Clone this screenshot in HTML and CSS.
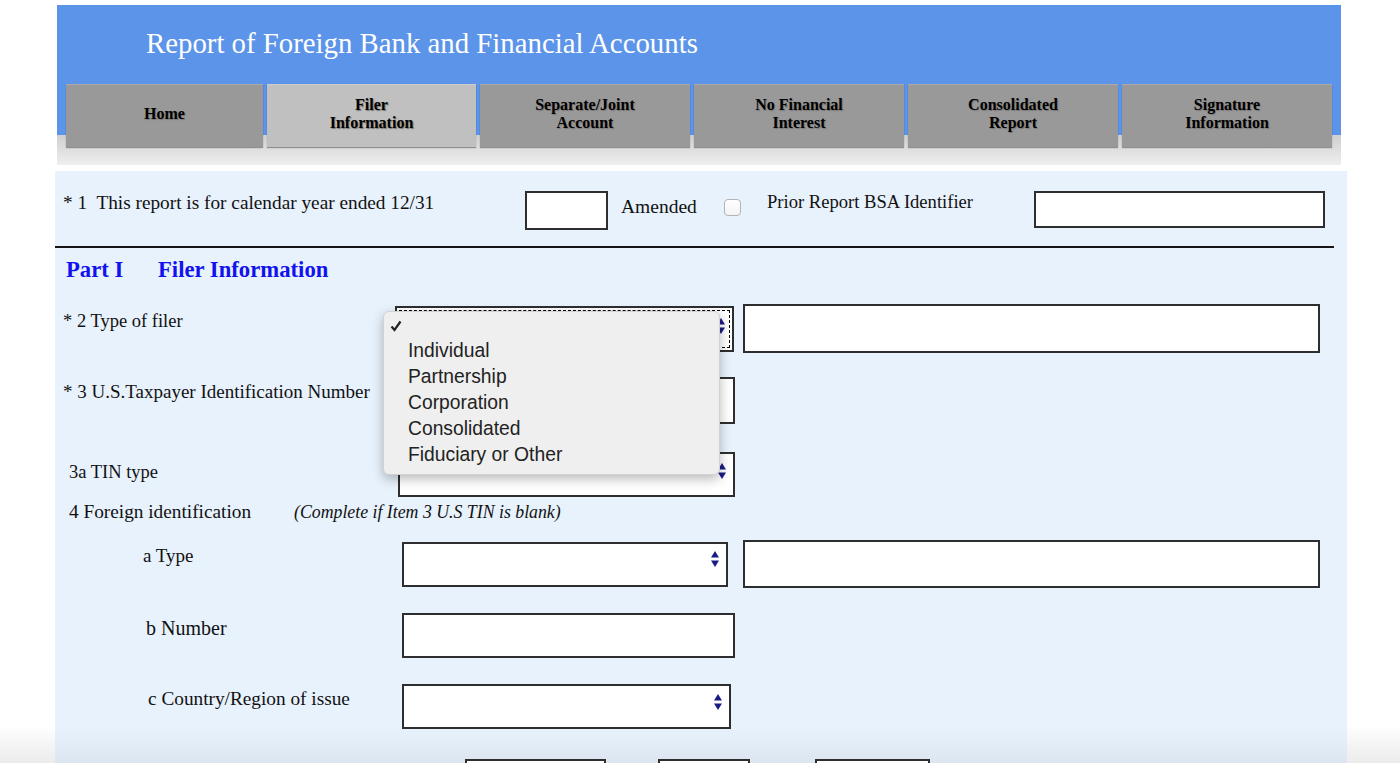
FILE: index.html
```html
<!DOCTYPE html>
<html lang="en">
<head>
  <meta charset="UTF-8" />
  <meta name="viewport" content="width=device-width, initial-scale=1" />
  <title>FBAR - Filer Information</title>
  <link rel="stylesheet" href="styles.css">
</head>
<body>

<header class="masthead">
  <h1>Report of Foreign Bank and Financial Accounts</h1>
  <nav class="tabs">
    <a class="tab tab-home" href="#">Home</a>
    <a class="tab active" href="#">Filer<br>Information</a>
    <a class="tab" href="#">Separate/Joint<br>Account</a>
    <a class="tab" href="#">No Financial<br>Interest</a>
    <a class="tab" href="#">Consolidated<br>Report</a>
    <a class="tab" href="#">Signature<br>Information</a>
  </nav>
</header>

<form class="panel">
  <div class="year-row">
    <label class="year-label" for="calYear">* 1&nbsp; This report is for calendar year ended 12/31</label>
    <input type="text" id="calYear" class="box year-input" />
    <label class="amended-label" for="amended">Amended</label>
    <input type="checkbox" id="amended" class="check" />
    <label class="prior-label" for="priorId">Prior Report BSA Identifier</label>
    <input type="text" id="priorId" class="box prior-input" />
  </div>
  <hr class="rule" />

  <h2 class="part-heading"><span class="part-no">Part I</span>Filer Information</h2>

  <!-- Item 2 -->
  <div class="row row-2">
    <label class="lbl lbl-2" for="filerType">* 2 Type of filer</label>
    <span class="select-wrap">
      <select id="filerType" class="box sel sel-2 focused">
        <option></option>
        <option>Individual</option>
        <option>Partnership</option>
        <option>Corporation</option>
        <option>Consolidated</option>
        <option>Fiduciary or Other</option>
      </select>
      <svg class="arrows" viewBox="0 0 8 16"><path d="M0 6.5 L4 0 L8 6.5 Z M0 9.5 L8 9.5 L4 16 Z" /></svg>
    </span>
    <input type="text" class="box wide-input wide-2" />
  </div>

  <!-- Item 3 -->
  <div class="row row-3">
    <label class="lbl lbl-3" for="tin">* 3 U.S.Taxpayer Identification Number</label>
    <input type="text" id="tin" class="box tin-input" />
  </div>

  <div class="row row-3a">
    <label class="lbl lbl-3a" for="tinType">3a TIN type</label>
    <span class="select-wrap">
      <select id="tinType" class="box sel sel-3a"><option></option></select>
      <svg class="arrows" viewBox="0 0 8 16"><path d="M0 6.5 L4 0 L8 6.5 Z M0 9.5 L8 9.5 L4 16 Z" /></svg>
    </span>
  </div>

  <!-- Item 4 -->
  <div class="row row-4">
    <span class="lbl lbl-4">4 Foreign identification</span>
    <em class="hint">(Complete if Item 3 U.S TIN is blank)</em>
  </div>

  <div class="row row-a">
    <label class="lbl lbl-a" for="foreignType">a Type</label>
    <span class="select-wrap">
      <select id="foreignType" class="box sel sel-a"><option></option></select>
      <svg class="arrows" viewBox="0 0 8 16"><path d="M0 6.5 L4 0 L8 6.5 Z M0 9.5 L8 9.5 L4 16 Z" /></svg>
    </span>
    <input type="text" class="box wide-input wide-a" />
  </div>

  <div class="row row-b">
    <label class="lbl lbl-b" for="foreignNo">b Number</label>
    <input type="text" id="foreignNo" class="box number-input" />
  </div>

  <div class="row row-c">
    <label class="lbl lbl-c" for="country">c Country/Region of issue</label>
    <span class="select-wrap">
      <select id="country" class="box sel sel-c"><option></option></select>
      <svg class="arrows" viewBox="0 0 8 16"><path d="M0 6.5 L4 0 L8 6.5 Z M0 9.5 L8 9.5 L4 16 Z" /></svg>
    </span>
  </div>

  <div class="actions">
    <button type="button" class="btn btn-prev"></button>
    <button type="button" class="btn btn-save"></button>
    <button type="button" class="btn btn-next"></button>
  </div>

  <!-- open options list of item 2 -->
  <ul class="option-menu">
    <li class="picked">
      <svg class="tick" viewBox="0 0 12 12"><path d="M1.5 6.5 L4.5 10 L10.5 1.5" /></svg>
    </li>
    <li>Individual</li>
    <li>Partnership</li>
    <li>Corporation</li>
    <li>Consolidated</li>
    <li>Fiduciary or Other</li>
  </ul>
</form>

</body>
</html>
```

FILE: styles.css
```css
body {
  margin: 0;
  font-family: "Liberation Serif", "Times New Roman", serif;
  font-size: 19px;
  color: #111;
  background: linear-gradient(to bottom, #fff 0, #fff 725px, #ebebeb 763px);
  min-height: 763px;
}
.masthead {
  margin: 5px 0 0 57px;
  width: 1284px;
  height: 160px;
  padding-top: 21px;
  box-sizing: border-box;
  background: linear-gradient(to bottom, #5b94e8 0, #5b94e8 130px, #cfcfcf 130px, #efefef 160px);
}
.masthead h1 {
  margin: 0;
  padding-left: 89px;
  font-size: 28.8px;
  line-height: 34px;
  font-weight: normal;
  color: #fff;
}
.tabs {
  display: flex;
  gap: 4px;
  margin: 24px 0 0 9px;
}
.tab {
  display: flex;
  align-items: center;
  justify-content: center;
  width: 210px;
  height: 63px;
  padding-bottom: 5px;
  box-sizing: border-box;
  background: #999;
  border-top: 1px solid #a9a9a9;
  box-shadow: 0 1px 1px rgba(0,0,0,0.35);
  color: #000;
  text-decoration: none;
  text-align: center;
  font-weight: bold;
  font-size: 16px;
  line-height: 18px;
  text-shadow: 1px 1px 1px #777;
}
.tab-home {
  width: 197px;
}
.tab.active {
  width: 209px;
  background: #c0c0c0;
  border-top-color: #cdcdcd;
}

.panel {
  position: relative;
  margin: 6px 0 0 55px;
  width: 1292px;
  height: 620px;
  background: linear-gradient(to bottom, #e8f2fd 0, #e8f2fd 555px, #dae3ed 600px);
}

.box {
  box-sizing: border-box;
  border: 2px solid #2e2e2e;
  background: #fff;
  font: inherit;
  margin: 0;
  padding: 0 8px;
}

.year-row {
  display: flex;
  align-items: flex-start;
  height: 75px;
  padding-left: 8px;
}
.year-label {
  width: 462px;
  margin-top: 21px;
  line-height: 22px;
  font-size: 19.3px;
}
.year-input {
  width: 83px;
  height: 39px;
  margin-top: 20px;
}
.amended-label {
  width: 103px;
  margin: 25px 0 0 13px;
  line-height: 22px;
  font-size: 19.5px;
}
.check {
  appearance: none;
  width: 17px;
  height: 17px;
  margin: 28px 26px 0 0;
  border: 1px solid #b4b4b4;
  border-radius: 4px;
  background: linear-gradient(#fff, #f3f3f3);
}
.prior-label {
  width: 267px;
  margin-top: 20px;
  line-height: 22px;
  font-size: 18.6px;
}
.prior-input {
  width: 291px;
  height: 37px;
  margin-top: 20px;
}
.rule {
  width: 1279px;
  height: 0;
  margin: 0;
  border: 0;
  border-top: 2px solid #151515;
}

.part-heading {
  height: 52px;
  box-sizing: border-box;
  margin: 0;
  padding: 9px 0 0 11px;
  font-size: 22.7px;
  line-height: 26px;
  color: #1212ee;
}
.part-no {
  display: inline-block;
  width: 92px;
}

.row {
  display: flex;
  align-items: flex-start;
  padding-left: 8px;
}
.lbl {
  line-height: 22px;
}
.select-wrap {
  position: relative;
  display: block;
}
.sel {
  appearance: none;
  display: block;
  height: 45px;
}
.sel.focused {
  outline: 1px dashed #000;
  outline-offset: -5px;
}
.arrows {
  position: absolute;
  right: 9px;
  top: 50%;
  width: 8px;
  height: 16px;
  margin-top: -8px;
  fill: #1b1b85;
}
.wide-input {
  width: 577px;
}

.row-2 { height: 70px; }
.lbl-2 { width: 332px; margin-top: 10px; font-size: 18.5px; }
.sel-2 { width: 339px; height: 46px; margin-top: 6px; }
.wide-2 { height: 49px; margin: 4px 0 0 9px; }

.row-3 { height: 75px; }
.lbl-3 { width: 335px; margin-top: 11px; }
.tin-input { width: 337px; height: 47px; margin-top: 7px; }

.row-3a { height: 55px; }
.lbl-3a { width: 329px; margin: 16px 0 0 6px; font-size: 18.5px; }
.sel-3a { width: 337px; margin-top: 7px; }

.row-4 { height: 30px; }
.lbl-4 { width: 225px; margin: 1px 0 0 6px; font-size: 19.3px; }
.hint { line-height: 22px; margin-top: 1px; font-size: 17.8px; }

.row-a { height: 75px; }
.lbl-a { width: 259px; margin: 15px 0 0 80px; }
.sel-a { width: 326px; margin-top: 12px; }
.wide-a { height: 48px; margin: 10px 0 0 15px; }

.row-b { height: 70px; }
.lbl-b { width: 256px; margin: 12px 0 0 83px; font-size: 20px; }
.number-input { width: 333px; height: 45px; margin-top: 8px; }

.row-c { height: 70px; }
.lbl-c { width: 254px; margin: 13px 0 0 85px; font-size: 19.3px; }
.sel-c { width: 329px; margin-top: 9px; }

.actions {
  display: flex;
  padding: 14px 0 0 410px;
}
.btn {
  height: 40px;
  border: 2px solid #2e2e2e;
  background: #fff;
}
.btn-prev { width: 141px; }
.btn-save { width: 92px; margin-left: 52px; }
.btn-next { width: 115px; margin-left: 65px; }

.option-menu {
  position: absolute;
  left: 328px;
  top: 140px;
  width: 337px;
  margin: 0;
  padding: 4px 0 6px;
  box-sizing: border-box;
  list-style: none;
  background: #efefef;
  border: 1px solid #d2d2d2;
  border-radius: 6px;
  box-shadow: 0 4px 12px rgba(0,0,0,0.28);
  font-family: "Liberation Sans", Arial, sans-serif;
  font-size: 19.3px;
  color: #222;
}
.option-menu li {
  height: 26px;
  line-height: 26px;
  padding-left: 24px;
}
.option-menu li.picked {
  height: 22px;
  padding-left: 6px;
}
.tick {
  width: 12px;
  height: 12px;
  margin-top: 4px;
  fill: none;
  stroke: #222;
  stroke-width: 2.2;
  vertical-align: top;
}
```
